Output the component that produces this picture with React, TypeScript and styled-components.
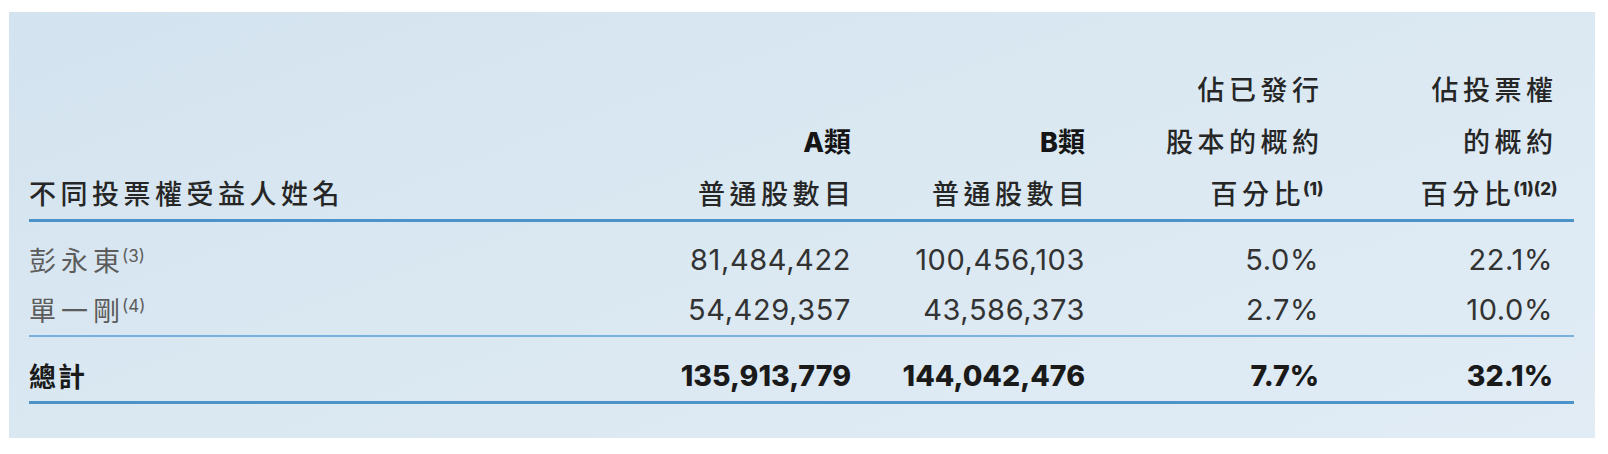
import styled, { createGlobalStyle } from "styled-components";

const GlobalStyle = createGlobalStyle`
	html, body {
		margin: 0;
		padding: 0;
		background: #ffffff;
	}
	body {
		font-family: "Noto Sans CJK TC", "Noto Sans", sans-serif;
	}
`;

const Page = styled.div`
	width: 1608px;
	height: 454px;
	padding: 12px 13px 16px 9px;
	box-sizing: border-box;
`;

const Panel = styled.div`
	height: 426px;
	box-sizing: border-box;
	padding: 51px 21px 0 20px;
	background: linear-gradient(160deg, #d3e3ef 0%, #dae8f2 45%, #e1ecf5 100%);
`;

const Row = styled.div<{ $line: number; $lineColor: string; $pad?: string }>`
	display: grid;
	grid-template-columns: 1fr 234px 234px 234px 234px;
	border-bottom: ${(p) => p.$line}px solid ${(p) => p.$lineColor};
	padding: ${(p) => p.$pad ?? "0"};
`;

const HeadCell = styled.div<{ $left?: boolean }>`
	display: flex;
	flex-direction: column;
	justify-content: flex-end;
	align-items: ${(p) => (p.$left ? "flex-start" : "flex-end")};
	padding-right: ${(p) => (p.$left ? "0" : "21px")};
	font-family: "Noto Sans CJK TC", sans-serif;
	font-size: 27px;
	font-weight: 500;
	line-height: 52px;
	letter-spacing: 4.5px;
	color: #262626;
	white-space: nowrap;
`;

const HeadLine = styled.span<{ $bold?: boolean }>`
	height: 52px;
	font-weight: ${(p) => (p.$bold ? 700 : 500)};
	color: ${(p) => (p.$bold ? "#151515" : "inherit")};
	margin-right: -4.5px;
`;

const Latin = styled.span`
	font-family: "Inter", sans-serif;
	font-weight: 800;
	font-size: 27px;
	line-height: 0;
	letter-spacing: 0;
`;

const Sup = styled.sup<{ $bold?: boolean }>`
	font-family: "Inter", sans-serif;
	font-size: 17px;
	line-height: 0;
	font-weight: ${(p) => (p.$bold ? 800 : 400)};
	letter-spacing: 0;
	vertical-align: 0;
	position: relative;
	top: -9px;
	margin-left: ${(p) => (p.$bold ? "-2px" : "2px")};
`;

const Name = styled.div<{ $bold?: boolean }>`
	font-family: "Noto Sans CJK TC", sans-serif;
	font-size: 27px;
	line-height: 50px;
	letter-spacing: ${(p) => (p.$bold ? "2px" : "5px")};
	font-weight: ${(p) => (p.$bold ? 700 : 400)};
	color: ${(p) => (p.$bold ? "#1a1a1a" : "#5c5c5c")};
	white-space: nowrap;
	height: 50px;
`;

const NameText = styled.span`
	margin-right: -5px;
`;

const Num = styled.div<{ $bold?: boolean }>`
	font-family: "Inter", sans-serif;
	font-size: ${(p) => (p.$bold ? "28.5px" : "29px")};
	line-height: 50px;
	height: 50px;
	text-align: right;
	padding-right: 21px;
	font-weight: ${(p) => (p.$bold ? 800 : 400)};
	letter-spacing: ${(p) => (p.$bold ? "0" : "0.6px")};
	color: ${(p) => (p.$bold ? "#1a1a1a" : "#333333")};
	white-space: nowrap;
`;

const Body = styled.div`
	padding-top: 13px;
	border-bottom: 2px solid #78b2dc;
`;

type Holder = { name: string; note: string; a: string; b: string; c: string; d: string };

const holders: Holder[] = [
	{ name: "彭永東", note: "(3)", a: "81,484,422", b: "100,456,103", c: "5.0%", d: "22.1%" },
	{ name: "單一剛", note: "(4)", a: "54,429,357", b: "43,586,373", c: "2.7%", d: "10.0%" },
];

export default function App() {
	return (
		<>
			<GlobalStyle />
			<Page>
				<Panel>
					<Row $line={3} $lineColor="#4b93c8">
						<HeadCell $left>
							<HeadLine>不同投票權受益人姓名</HeadLine>
						</HeadCell>
						<HeadCell>
							<HeadLine $bold>
								<Latin>A</Latin>類
							</HeadLine>
							<HeadLine>普通股數目</HeadLine>
						</HeadCell>
						<HeadCell>
							<HeadLine $bold>
								<Latin>B</Latin>類
							</HeadLine>
							<HeadLine>普通股數目</HeadLine>
						</HeadCell>
						<HeadCell>
							<HeadLine>佔已發行</HeadLine>
							<HeadLine>股本的概約</HeadLine>
							<HeadLine>
								百分比<Sup $bold>(1)</Sup>
							</HeadLine>
						</HeadCell>
						<HeadCell>
							<HeadLine>佔投票權</HeadLine>
							<HeadLine>的概約</HeadLine>
							<HeadLine>
								百分比<Sup $bold>(1)(2)</Sup>
							</HeadLine>
						</HeadCell>
					</Row>
					<Body>
						{holders.map((h) => (
							<Row key={h.name} $line={0} $lineColor="transparent">
								<Name>
									<NameText>{h.name}</NameText>
									<Sup>{h.note}</Sup>
								</Name>
								<Num>{h.a}</Num>
								<Num>{h.b}</Num>
								<Num>{h.c}</Num>
								<Num>{h.d}</Num>
							</Row>
						))}
					</Body>
					<Row $line={3} $lineColor="#4b93c8" $pad="14px 0 0">
						<Name $bold>總計</Name>
						<Num $bold>135,913,779</Num>
						<Num $bold>144,042,476</Num>
						<Num $bold>7.7%</Num>
						<Num $bold>32.1%</Num>
					</Row>
				</Panel>
			</Page>
		</>
	);
}
